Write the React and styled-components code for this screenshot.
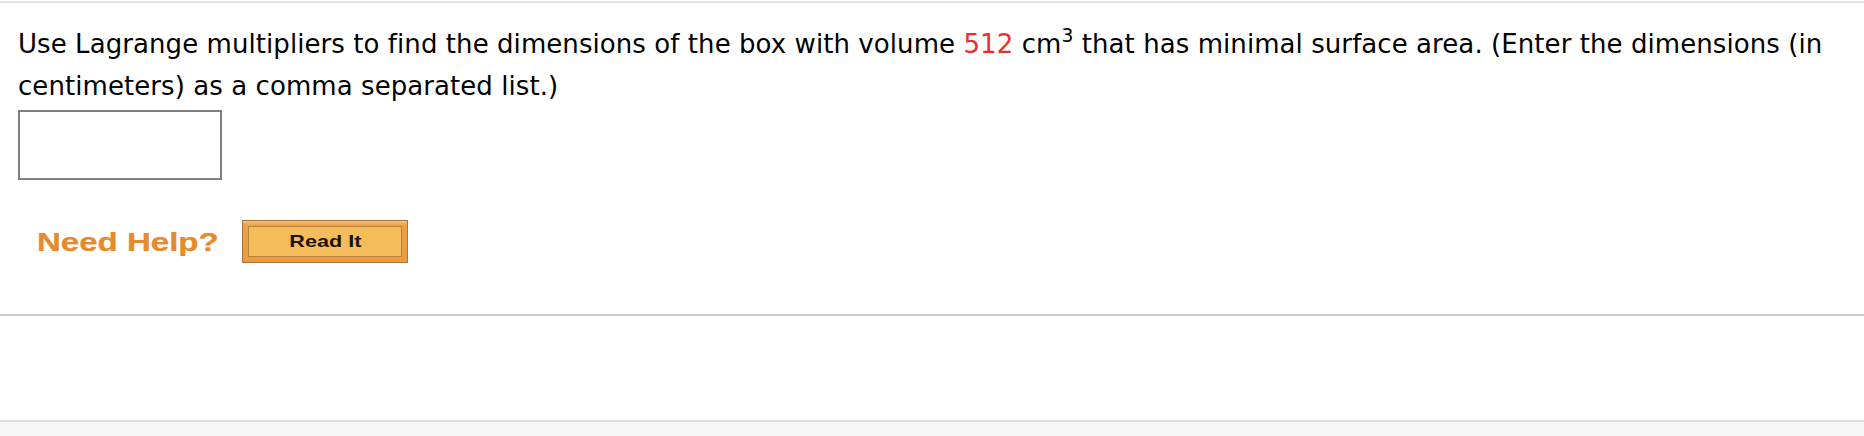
import styled, { createGlobalStyle } from "styled-components";

const GlobalStyle = createGlobalStyle`
  html, body {
    margin: 0;
    padding: 0;
    background: #fff;
  }
`;

const Page = styled.div`
  width: 1864px;
  height: 436px;
  display: flex;
  flex-direction: column;
  background: #fff;
  overflow: hidden;
`;

const Question = styled.section`
  border-top: 2px solid #e3e3e3;
  margin-top: 1px;
  padding: 20px 18px 0 18px;
  height: 290px;
  box-sizing: border-box;
`;

const Prompt = styled.p`
  margin: 0;
  font-family: "DejaVu Sans", Verdana, sans-serif;
  font-size: 26px;
  letter-spacing: 0.07px;
  line-height: 42px;
  color: #000;
  white-space: nowrap;
`;

const Highlight = styled.span`
  color: #e8302c;
`;

const Sup = styled.sup`
  font-size: 0.72em;
  line-height: 0;
  vertical-align: 0.6em;
`;

const AnswerBox = styled.input`
  display: block;
  margin-top: 3px;
  width: 204px;
  height: 70px;
  box-sizing: border-box;
  border: 2px solid #808080;
  background: #fff;
  outline: none;
`;

const HelpRow = styled.div`
  display: flex;
  align-items: center;
  margin-top: 40px;
  padding-left: 19px;
  height: 43px;
`;

/* the help label and button text are stretched images in the original */
const HelpLabel = styled.span`
  width: 205px;
  font-family: "Liberation Sans", Arial, sans-serif;
  font-weight: bold;
  font-size: 26px;
  line-height: 30px;
  color: #e48a2f;
  text-shadow: 0 0 1px rgba(228, 138, 47, 0.6);
  white-space: nowrap;

  & span {
    display: inline-block;
    transform: scaleX(1.27);
    transform-origin: left center;
  }
`;

const ReadButton = styled.button`
  width: 166px;
  height: 43px;
  box-sizing: border-box;
  padding: 5px;
  border: 1px solid #a8743a;
  background: linear-gradient(#f7c27c 0, #eea048 4px, #ec9a40 100%);
  cursor: pointer;
  display: flex;
`;

const ReadInner = styled.span`
  flex: 1;
  display: flex;
  align-items: center;
  justify-content: center;
  border: 1px solid #b8823c;
  background: #f5bc5c;
  font-family: "Liberation Sans", Arial, sans-serif;
  font-weight: bold;
  font-size: 17px;
  color: #1a1208;

  & span {
    display: inline-block;
    transform: scaleX(1.27);
  }
`;

const Divider = styled.div`
  height: 2px;
  background: ${(p) => p.$color};
  margin-top: ${(p) => p.$gap}px;
`;

const Footer = styled.div`
  flex: 1;
  background: #f5f5f5;
`;

export default function App() {
  return (
    <Page>
      <GlobalStyle />
      <Question>
        <Prompt>
          Use Lagrange multipliers to find the dimensions of the box with volume{" "}
          <Highlight>512</Highlight> cm<Sup>3</Sup> that has minimal surface area. (Enter the
          dimensions (in
          <br />
          centimeters) as a comma separated list.)
        </Prompt>
        <AnswerBox type="text" />
        <HelpRow>
          <HelpLabel>
            <span>Need Help?</span>
          </HelpLabel>
          <ReadButton>
            <ReadInner>
              <span>Read It</span>
            </ReadInner>
          </ReadButton>
        </HelpRow>
      </Question>
      <Divider $color="#c9c9c9" $gap={23} />
      <Divider $color="#dcdcdc" $gap={104} />
      <Footer />
    </Page>
  );
}
